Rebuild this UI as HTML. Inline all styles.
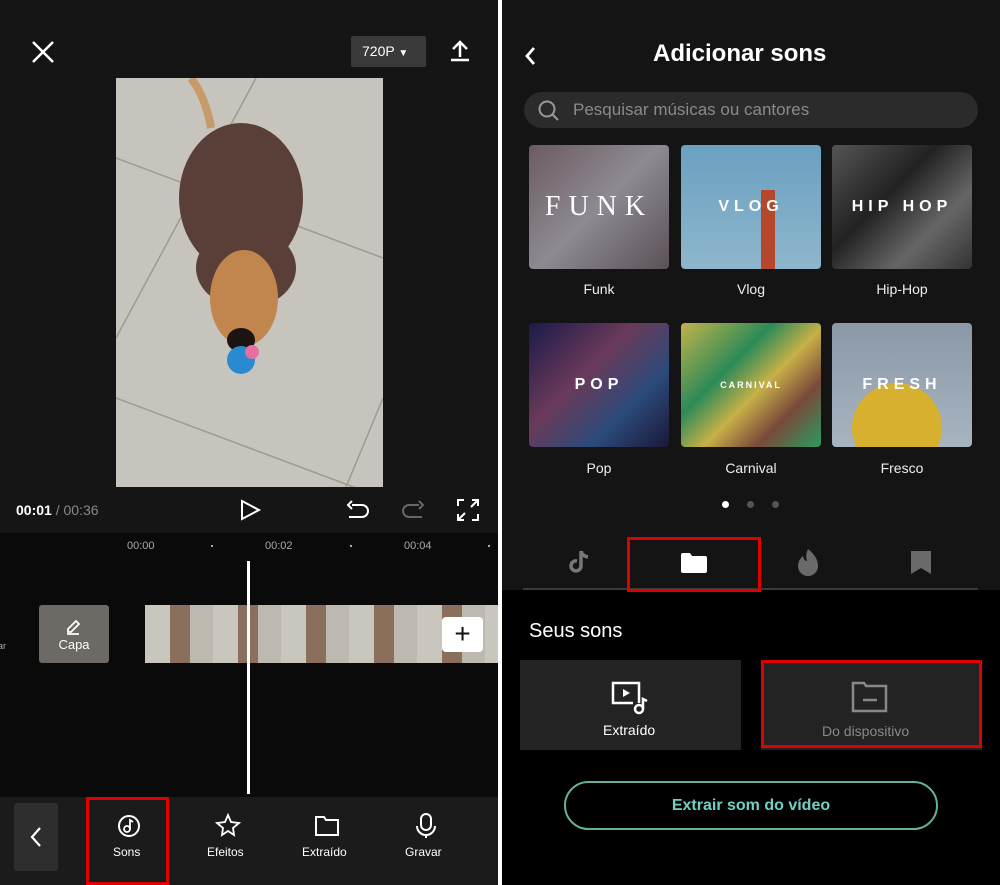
<!DOCTYPE html>
<html><head><meta charset="utf-8"><style>
*{margin:0;padding:0;box-sizing:border-box}
body{width:1000px;height:885px;overflow:hidden;background:#fff;font-family:"Liberation Sans",sans-serif;position:relative}
.a{position:absolute}
.t{color:#fff;white-space:nowrap}
.tile{position:absolute;width:140px;height:124px;border-radius:4px;overflow:hidden}
.tile span{position:absolute;left:0;right:0;top:50%;transform:translateY(-50%);text-align:center;color:#fff;font-weight:bold;letter-spacing:5px}
.lbl{position:absolute;width:140px;text-align:center;color:#eee;font-size:14px}
</style></head><body>
<!-- LEFT -->
<div class="a" style="left:0;top:0;width:498px;height:533px;background:#151515"></div>
<div class="a" style="left:0;top:533px;width:498px;height:264px;background:#0a0a0a"></div>
<div class="a" style="left:0;top:797px;width:498px;height:88px;background:#1b1b1b"></div>
<svg class="a" style="left:31px;top:40px" width="24" height="24"><path d="M2 2L22 22M22 2L2 22" stroke="#fff" stroke-width="2.5"/></svg>
<div class="a" style="left:351px;top:36px;width:75px;height:31px;background:#3a3a3a;border-radius:2px;color:#fff;font-size:14px;line-height:31px;padding-left:11px">720P <span style="font-size:10px">▼</span></div>
<svg class="a" style="left:448px;top:38px" width="24" height="24"><path d="M12 19V4M5 11L12 4L19 11M3 22H21" stroke="#fff" stroke-width="2.5" fill="none"/></svg>
<div class="a" style="left:116px;top:78px;width:267px;height:409px;background:#c6c4bc;overflow:hidden">
<svg width="267" height="409"><path d="M0 80L267 180M0 320L267 420M140 0L0 260M267 320L230 409" stroke="#9d9a92" stroke-width="1.5"/>
<path d="M75 0Q90 20 95 50" stroke="#c79a6a" stroke-width="8" fill="none"/>
<ellipse cx="125" cy="120" rx="62" ry="75" fill="#5a3f38"/>
<ellipse cx="130" cy="190" rx="50" ry="40" fill="#5a3f38"/>
<ellipse cx="128" cy="220" rx="34" ry="48" fill="#c0864e"/>
<ellipse cx="125" cy="262" rx="14" ry="12" fill="#1c1410"/>
<circle cx="125" cy="282" r="14" fill="#2a8ad0"/>
<circle cx="136" cy="274" r="7" fill="#e46fa0"/></svg></div>
<div class="a t" style="left:16px;top:502px;font-size:14px;font-weight:bold">00:01 <span style="color:#888;font-weight:normal">/ 00:36</span></div>
<svg class="a" style="left:238px;top:498px" width="24" height="24"><path d="M4 3L21 12L4 21Z" stroke="#fff" stroke-width="2" fill="none"/></svg>
<svg class="a" style="left:345px;top:499px" width="26" height="24"><path d="M7 6H17A6 6 0 0 1 17 18H4M7 2L3 6L7 10" stroke="#fff" stroke-width="2" fill="none"/></svg>
<svg class="a" style="left:400px;top:499px" width="26" height="24"><path d="M19 6H9A6 6 0 0 0 9 18H22M19 2L23 6L19 10" stroke="#666" stroke-width="2" fill="none"/></svg>
<svg class="a" style="left:456px;top:498px" width="24" height="24"><path d="M2 8V2H8M16 2H22V8M22 16V22H16M8 22H2V16M3 21L9 15M21 3L15 9" stroke="#fff" stroke-width="2" fill="none"/></svg>
<div class="a" style="left:127px;top:540px;font-size:11px;color:#aaa">00:00</div>
<div class="a" style="left:265px;top:540px;font-size:11px;color:#aaa">00:02</div>
<div class="a" style="left:404px;top:540px;font-size:11px;color:#aaa">00:04</div>
<div class="a" style="left:211px;top:545px;width:2px;height:2px;background:#aaa"></div>
<div class="a" style="left:350px;top:545px;width:2px;height:2px;background:#aaa"></div>
<div class="a" style="left:488px;top:545px;width:2px;height:2px;background:#aaa"></div>
<div class="a" style="left:-4px;top:641px;font-size:9px;color:#aaa">iar</div>
<div class="a" style="left:39px;top:605px;width:70px;height:58px;background:#6d6a66;border-radius:3px;text-align:center;color:#fff;font-size:13px;padding-top:32px">Capa</div>
<svg class="a" style="left:64px;top:617px" width="18" height="18"><path d="M4 12L12 4L15 7L7 15H4ZM3 17H15" stroke="#fff" stroke-width="1.8" fill="none"/></svg>
<div class="a" style="left:145px;top:605px;width:353px;height:58px;background:repeating-linear-gradient(90deg,#c9c6be 0 25px,#8a6f5c 25px 45px,#bdb9b0 45px 68px)"></div>
<div class="a" style="left:442px;top:617px;width:41px;height:35px;background:#fff;border-radius:4px;text-align:center;font-size:28px;line-height:33px;color:#111">+</div>
<div class="a" style="left:247px;top:561px;width:3px;height:233px;background:#fff"></div>
<div class="a" style="left:14px;top:803px;width:44px;height:68px;background:#2e2e2e;border-radius:3px"></div>
<svg class="a" style="left:28px;top:826px" width="16" height="22"><path d="M12 2L4 11L12 20" stroke="#fff" stroke-width="2.2" fill="none"/></svg>
<svg class="a" style="left:116px;top:813px" width="26" height="26"><circle cx="13" cy="13" r="10" stroke="#fff" stroke-width="2" fill="none"/><circle cx="11" cy="16" r="3" stroke="#fff" stroke-width="1.8" fill="none"/><path d="M14 16V7L17 9" stroke="#fff" stroke-width="1.8" fill="none"/></svg>
<div class="a t" style="left:113px;top:845px;font-size:12px">Sons</div>
<svg class="a" style="left:215px;top:813px" width="28" height="26"><path d="M13 2L16 9L24 10L18 15L19 22L13 18L7 22L8 15L2 10L10 9Z" stroke="#fff" stroke-width="1.8" fill="none"/></svg>
<div class="a t" style="left:207px;top:845px;font-size:12px">Efeitos</div>
<svg class="a" style="left:314px;top:815px" width="26" height="22"><path d="M2 2H10L12 5H24V20H2Z" stroke="#fff" stroke-width="2" fill="none"/></svg>
<div class="a t" style="left:302px;top:845px;font-size:12px">Extraído</div>
<svg class="a" style="left:414px;top:812px" width="24" height="28"><rect x="7" y="2" width="10" height="16" rx="5" stroke="#fff" stroke-width="2" fill="none"/><path d="M3 14A9 9 0 0 0 21 14M12 22V26" stroke="#fff" stroke-width="2" fill="none"/></svg>
<div class="a t" style="left:405px;top:845px;font-size:12px">Gravar</div>
<div class="a" style="left:86px;top:797px;width:83px;height:88px;border:3px solid #e10000"></div>

<!-- RIGHT -->
<div class="a" style="left:502px;top:0;width:498px;height:590px;background:#141414"></div>
<div class="a" style="left:502px;top:590px;width:498px;height:295px;background:#000"></div>
<svg class="a" style="left:522px;top:45px" width="16" height="22"><path d="M12 3L5 11L12 19" stroke="#fff" stroke-width="2.8" fill="none"/></svg>
<div class="a t" style="left:653px;top:40px;font-size:24px;font-weight:bold">Adicionar sons</div>
<div class="a" style="left:524px;top:92px;width:454px;height:36px;background:#2b2b2b;border-radius:18px"></div>
<svg class="a" style="left:537px;top:99px" width="24" height="24"><circle cx="10" cy="10" r="7.5" stroke="#999" stroke-width="2" fill="none"/><path d="M15.5 15.5L21 21" stroke="#999" stroke-width="2"/></svg>
<div class="a" style="left:573px;top:100px;font-size:17px;color:#8a8a8a">Pesquisar músicas ou cantores</div>

<div class="tile" style="left:529px;top:145px;background:linear-gradient(135deg,#6d5a62,#8d8a92 50%,#5b5058)"><span style="font-size:28px;font-family:'Liberation Serif',serif;font-weight:normal;letter-spacing:8px">FUNK</span></div>
<div class="tile" style="left:681px;top:145px;background:linear-gradient(#6aa0c0,#8eb6cc)"><div class="a" style="left:80px;top:45px;width:14px;height:80px;background:#b5482c"></div><span style="font-size:16px">VLOG</span></div>
<div class="tile" style="left:832px;top:145px;background:linear-gradient(135deg,#555,#222 40%,#666 70%,#333)"><span style="font-size:16px">HIP HOP</span></div>
<div class="tile" style="left:529px;top:323px;background:linear-gradient(135deg,#1c1a4a,#6a3a5a 40%,#2c4a7a 70%,#1a1838)"><span style="font-size:16px">POP</span></div>
<div class="tile" style="left:681px;top:323px;background:linear-gradient(135deg,#c2b34a,#2c8a58 35%,#c7b048 55%,#7a4a3a 75%,#2a9a60)"><span style="font-size:9px;letter-spacing:2px">CARNIVAL</span></div>
<div class="tile" style="left:832px;top:323px;background:linear-gradient(#8a98a8,#a8b4c0)"><div class="a" style="left:20px;top:60px;width:90px;height:90px;border-radius:50%;background:#d8b030"></div><span style="font-size:16px">FRESH</span></div>
<div class="lbl" style="left:529px;top:281px">Funk</div>
<div class="lbl" style="left:681px;top:281px">Vlog</div>
<div class="lbl" style="left:832px;top:281px">Hip-Hop</div>
<div class="lbl" style="left:529px;top:460px">Pop</div>
<div class="lbl" style="left:681px;top:460px">Carnival</div>
<div class="lbl" style="left:832px;top:460px">Fresco</div>
<div class="a" style="left:722px;top:501px;width:7px;height:7px;border-radius:50%;background:#fff"></div>
<div class="a" style="left:747px;top:501px;width:7px;height:7px;border-radius:50%;background:#555"></div>
<div class="a" style="left:772px;top:501px;width:7px;height:7px;border-radius:50%;background:#555"></div>
<svg class="a" style="left:568px;top:548px" width="26" height="28"><path d="M13 3V18A5 5 0 1 1 9 13M13 3Q14 8 20 9" stroke="#777" stroke-width="3.5" fill="none"/></svg>
<svg class="a" style="left:679px;top:551px" width="30" height="24"><path d="M2 4Q2 2 4 2H11L13 5H26Q28 5 28 7V20Q28 22 26 22H4Q2 22 2 20Z" fill="#fff"/></svg>
<svg class="a" style="left:794px;top:547px" width="28" height="30"><path d="M14 2Q24 10 24 19A10 10 0 0 1 4 19Q4 13 9 9Q10 14 13 14Q11 8 14 2Z" fill="#6a6a6a"/></svg>
<svg class="a" style="left:908px;top:550px" width="26" height="26"><path d="M3 1H23V24L13 18L3 24Z" fill="#6a6a6a"/></svg>
<div class="a" style="left:523px;top:588px;width:455px;height:2px;background:#3a3a3a"></div>
<div class="a" style="left:627px;top:537px;width:134px;height:55px;border:3px solid #e10000"></div>
<div class="a t" style="left:529px;top:620px;font-size:20px">Seus sons</div>
<div class="a" style="left:520px;top:660px;width:221px;height:90px;background:#232323"></div>
<svg class="a" style="left:609px;top:679px" width="48" height="44"><path d="M30 24V4H4V24H24" stroke="#fff" stroke-width="2.5" fill="none"/><path d="M14 10L21 14L14 18Z" fill="#fff"/><circle cx="30" cy="30" r="4" stroke="#fff" stroke-width="2.5" fill="none"/><path d="M34 30V20L38 22" stroke="#fff" stroke-width="2.5" fill="none"/></svg>
<div class="a t" style="left:603px;top:722px;font-size:14px">Extraído</div>
<div class="a" style="left:761px;top:660px;width:221px;height:90px;background:#232323"></div>
<svg class="a" style="left:851px;top:681px" width="38" height="32"><path d="M2 2H13L15 5H35V30H2Z" stroke="#888" stroke-width="2.5" fill="none"/><path d="M12 19H26" stroke="#888" stroke-width="2.5"/></svg>
<div class="a" style="left:822px;top:723px;font-size:14px;color:#8a8a8a">Do dispositivo</div>
<div class="a" style="left:761px;top:660px;width:221px;height:88px;border:3px solid #e10000"></div>
<div class="a" style="left:564px;top:781px;width:374px;height:49px;border:2px solid #64b0a0;border-radius:25px;text-align:center;line-height:45px;color:#72d0c0;font-size:16px;font-weight:bold">Extrair som do vídeo</div>
</body></html>
